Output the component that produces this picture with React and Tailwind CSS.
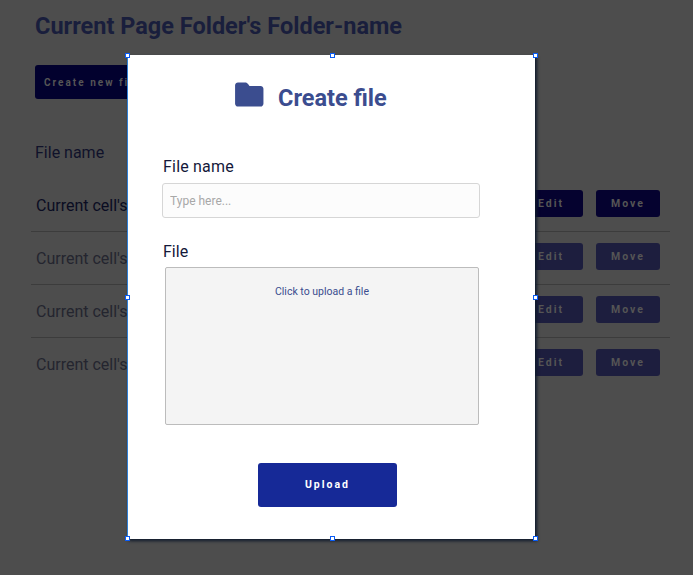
import React from 'react';

const rows = [
  { id: 1, active: true },
  { id: 2, active: false },
  { id: 3, active: false },
  { id: 4, active: false },
];

const Handle = ({ className }) => (
  <span className={`absolute w-[5px] h-[5px] bg-white border border-[#0a5cf5] ${className}`}></span>
);

const App = () => {
  return (
    <div className="relative w-[693px] h-[575px] overflow-hidden bg-[#4d4d4d] font-['Roboto',sans-serif]">
      {/* Page behind the overlay */}
      <div className="pl-[31px] pr-[23px] pt-[13px]">
        <h1 className="pl-[4px] text-[23.5px] leading-[27px] font-bold text-[#191e3c]">
          Current Page Folder's Folder-name
        </h1>
        <div className="pl-[4px] mt-[25px]">
          <button className="w-[120px] h-[34px] pl-[9px] text-left rounded-[3px] bg-[#02012e] text-[#555] text-[10px] font-bold tracking-[2px] whitespace-nowrap overflow-hidden">
            Create new file
          </button>
        </div>
        <div className="pl-[4px] mt-[42px] text-[16px] leading-[24px] text-[#10122a]">File name</div>
        <div className="mt-[14px]">
          {rows.map((row) => (
            <div key={row.id} className={`flex items-center justify-between h-[53px] pl-[5px] pr-[10px] border-b ${row.id < 4 ? 'border-[#3c3c3c]' : 'border-transparent'}`}>
              <span className={`pt-[2px] text-[16px] ${row.active ? 'text-[#0a0c22]' : 'text-[#24252f]'}`}>Current cell's</span>
              <div className="flex gap-[13px] mb-[3px]">
                {['Edit', 'Move'].map((label) => (
                  <button
                    key={label}
                    className={`w-[64px] h-[27px] rounded-[3px] text-[10.5px] font-bold tracking-[2px] text-[#555] ${row.active ? 'bg-[#05022f]' : 'bg-[#1d1e3e]'}`}
                  >
                    {label}
                  </button>
                ))}
              </div>
            </div>
          ))}
        </div>
      </div>

      {/* Modal */}
      <div className="absolute left-[127px] top-[55px] w-[408px] h-[484px] bg-white border-l border-[#2f7fd6] shadow-[2px_2px_3px_#0f1a2c]">
        <div className="flex items-start pl-[107px] pt-[27px]">
          <svg width="29" height="25" viewBox="0 0 30 26" className="text-[#3b4d8f]" fill="currentColor">
            <path d="M3 0.5h7.5c1.4 0 2.2 0.6 3 1.6l1.5 2h11.5c1.6 0 3 1.4 3 3V22.5c0 1.6-1.4 3-3 3H3c-1.6 0-3-1.4-3-3V3.5c0-1.6 1.4-3 3-3z" />
          </svg>
          <h2 className="ml-[14px] mt-[1px] text-[23.5px] leading-[30px] font-bold text-[#3b4d8f]">Create file</h2>
        </div>

        <div className="pl-[34px] mt-[42px]">
          <label className="block pl-[1px] text-[16px] leading-[24px] tracking-[0.2px] text-[#14183a]">File name</label>
          <input
            placeholder="Type here..."
            className="block mt-[4px] w-[318px] h-[35px] px-[7px] rounded-[3px] border border-[#d6d6d6] bg-[#fcfcfc] text-[12px] placeholder:text-[#a8a8a8] outline-none"
          />
          <label className="block pl-[1px] mt-[22px] text-[16px] leading-[24px] text-[#14183a]">File</label>
          <div className="ml-[3px] mt-[3px] w-[314px] h-[158px] pt-[17px] rounded-[2px] border border-[#bcbcbc] bg-[#f4f4f4] text-center text-[10.5px] leading-[14px] text-[#3b4d8f]">
            Click to upload a file
          </div>
          <button className="block ml-[96px] mt-[38px] w-[139px] h-[44px] rounded-[3px] bg-[#162997] text-white text-[10.5px] font-bold tracking-[2px]">
            Upload
          </button>
        </div>

        {/* Selection handles */}
        <Handle className="-left-[3px] -top-[2px]" />
        <Handle className="left-[202px] -top-[2px]" />
        <Handle className="-right-[3px] -top-[2px]" />
        <Handle className="-left-[3px] top-[240px]" />
        <Handle className="-right-[3px] top-[240px]" />
        <Handle className="-left-[3px] -bottom-[2px]" />
        <Handle className="left-[202px] -bottom-[2px]" />
        <Handle className="-right-[3px] -bottom-[2px]" />
      </div>
    </div>
  );
};

export default App;
